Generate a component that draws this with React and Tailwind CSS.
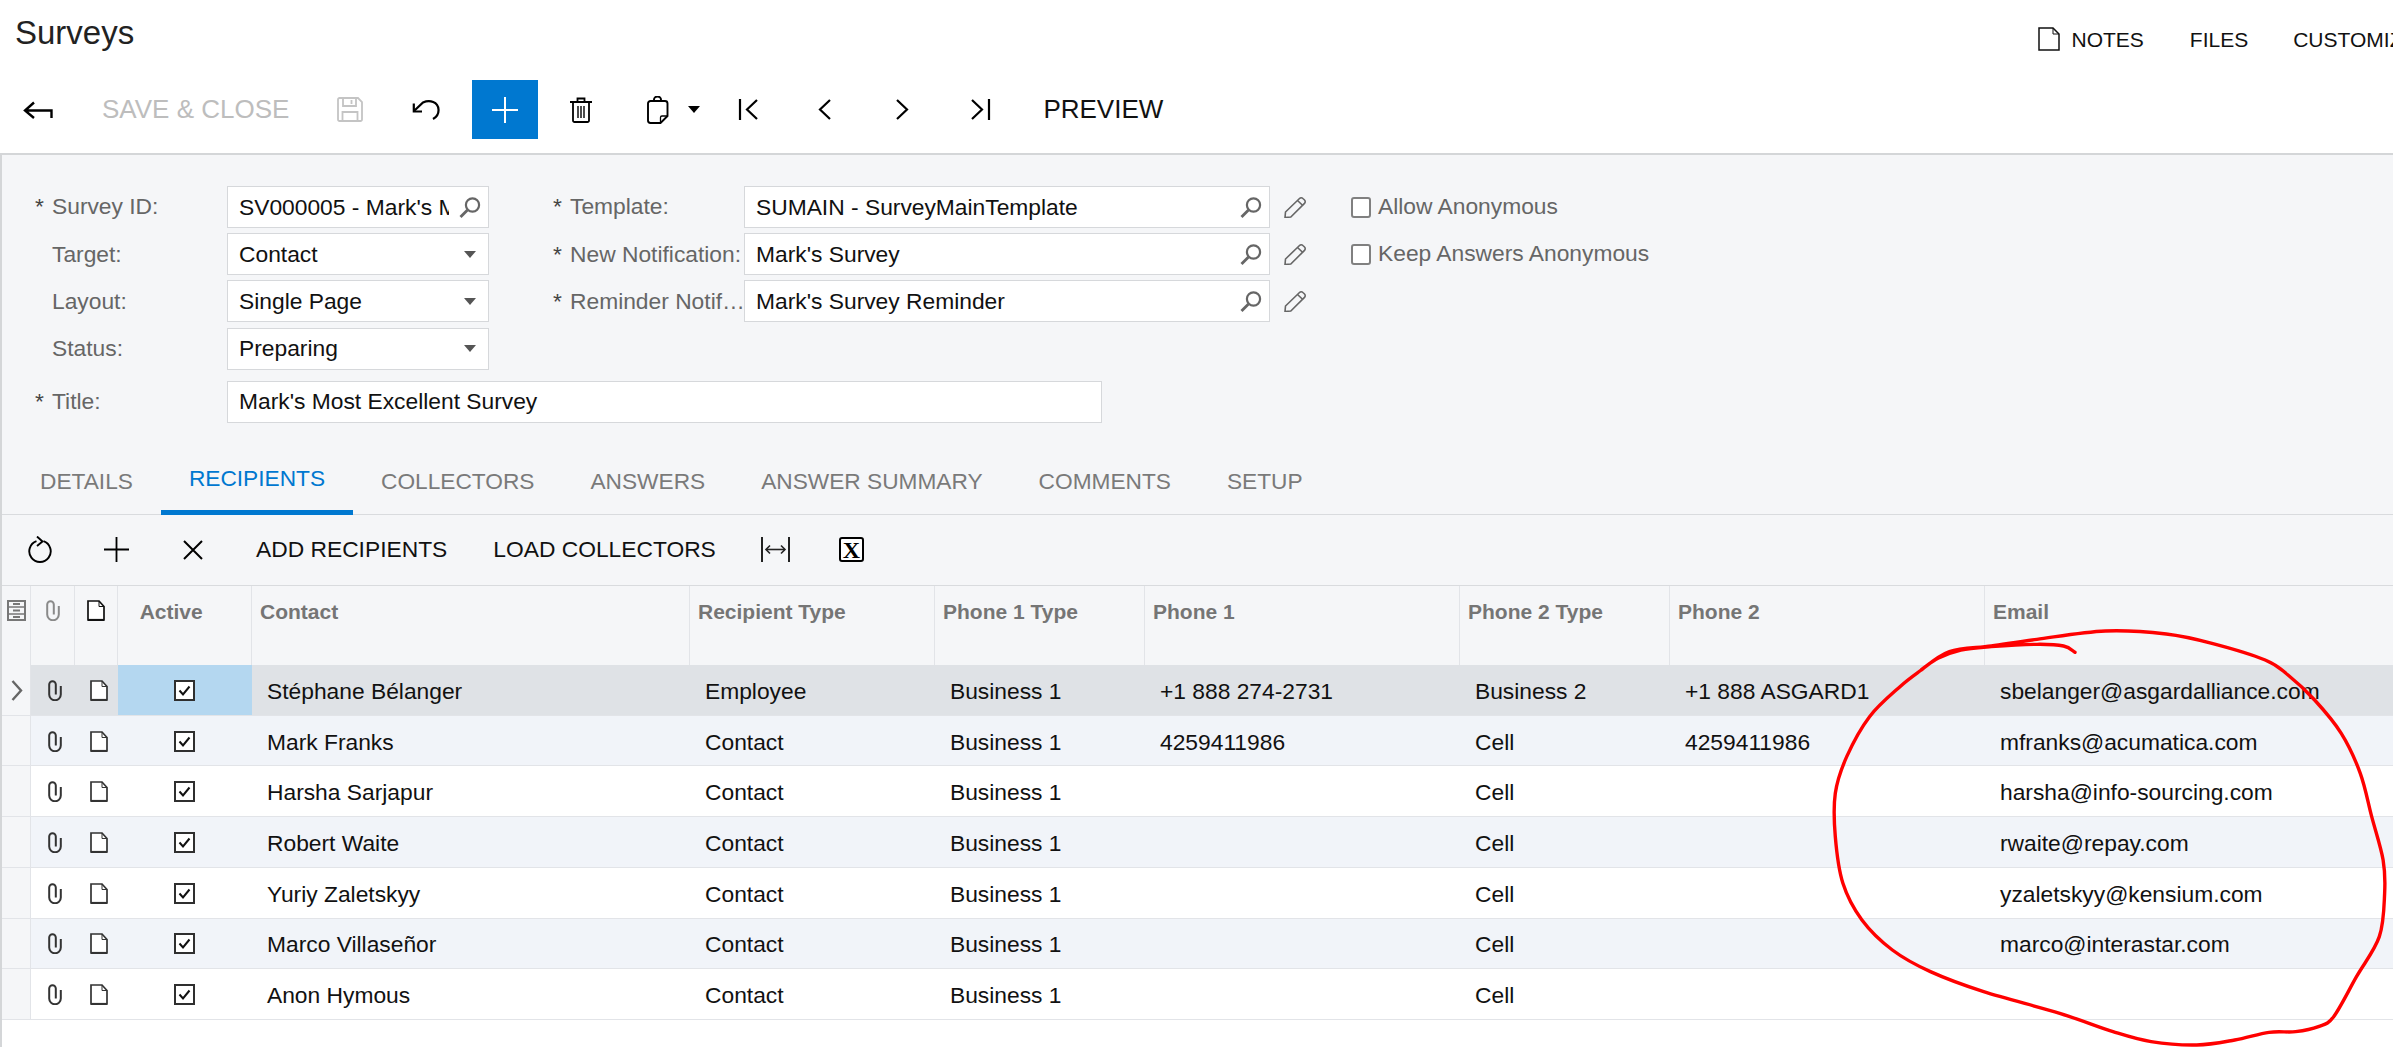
import React from 'react';

const smooth = (p) => {
  let d = `M${p[0][0]} ${p[0][1]}`;
  for (let i = 0; i < p.length - 1; i++) {
    const a = p[Math.max(i - 1, 0)], b = p[i], c = p[i + 1], e = p[Math.min(i + 2, p.length - 1)];
    d += ` C${b[0] + (c[0] - a[0]) / 6} ${b[1] + (c[1] - a[1]) / 6} ${c[0] - (e[0] - b[0]) / 6} ${c[1] - (e[1] - b[1]) / 6} ${c[0]} ${c[1]}`;
  }
  return d;
};
const inkPts = [[1150,277],[1135,258],[1100,253],[1040,260],[1000,270],[970,295],[948,330],[985,275],[1040,258],[1100,238],[1190,213],[1270,222],[1330,250],[1400,300],[1430,345],[1465,420],[1500,520],[1525,640],[1540,770],[1555,900],[1557,1000],[1550,1130],[1520,1250],[1490,1370],[1470,1400],[1440,1415],[1405,1417],[1360,1440],[1310,1455],[1250,1445],[1200,1415],[1130,1360],[1030,1295],[960,1235],[910,1170],[870,1080],[845,970],[835,830],[835,700],[850,590],[880,470],[920,380],[948,330]];

const Back = () => (<svg width="30" height="18" viewBox="0 0 30 18" fill="none" stroke="#000" strokeWidth="2.4"><path d="M2 9.5H28.5V17M11 1.5L2 9.5L11 17" /></svg>);
const Save = () => (<svg width="26" height="25" viewBox="0 0 26 25" fill="none" stroke="#c4c4c4" strokeWidth="1.8"><path d="M2.5 1H21L25 5V22.5a1.5 1.5 0 0 1-1.5 1.5H2.5A1.5 1.5 0 0 1 1 22.5V2.5A1.5 1.5 0 0 1 2.5 1Z" /><path d="M6 1V9H19V1M14.5 3V7M5.5 24V15H20.5V24" /></svg>);
const Undo = () => (<svg width="28" height="20" viewBox="0 0 28 20" fill="none" stroke="#000" strokeWidth="2.2"><path d="M2 11L11 2.5C18 -0.5 26 2 26.5 9.5C26.8 13.5 24.5 17 21 19" /><path d="M1.8 3.5V11.5H10" /></svg>);
const Plus = ({ c = '#000', s = 26, w = 2 }) => (<svg width={s} height={s} viewBox="0 0 26 26" fill="none" stroke={c} strokeWidth={w}><path d="M13 0V26M0 13H26" /></svg>);
const Trash = () => (<svg width="22" height="26" viewBox="0 0 22 26" fill="none" stroke="#000" strokeWidth="1.8"><path d="M0 5H22M7.5 5V1.5H14.5V5M3 5V23.5a1.5 1.5 0 0 0 1.5 1.5H17.5a1.5 1.5 0 0 0 1.5-1.5V5" /><path d="M8 9V21M11 9V21M14 9V21" strokeWidth="1.4" /></svg>);
const Clip = () => (<svg width="22" height="28" viewBox="0 0 22 28" fill="none" stroke="#000" strokeWidth="1.9"><path d="M7 5V3.5a3.5 3 0 0 1 7 0V5" /><path d="M3.5 5H18a2.5 2.5 0 0 1 2.5 2.5V20L13.5 27H3.5A2.5 2.5 0 0 1 1 24.5V7.5A2.5 2.5 0 0 1 3.5 5Z" /><path d="M20.5 20H15a1.5 1.5 0 0 0-1.5 1.5V27" strokeWidth="1.3" /></svg>);
const Chev = ({ d }) => (<svg width="22" height="22" viewBox="0 0 22 22" fill="none" stroke="#000" strokeWidth="2.2"><path d={d} /></svg>);

const Search = () => (<svg className="shrink-0" width="22" height="21" viewBox="0 0 22 21" fill="none" stroke="#666" strokeWidth="2.2"><circle cx="13.5" cy="8" r="6.6" /><path d="M8.5 13L1.5 20" strokeWidth="2.8" /></svg>);
const Pencil = () => (<svg width="23" height="22" viewBox="0 0 23 22" fill="none" stroke="#666" strokeWidth="1.6"><path d="M1.5 16L15.5 2.5a2.4 2.4 0 0 1 3.4 0L20.5 4a2.4 2.4 0 0 1 0 3.4L6.8 21L1 21.5Z" /><path d="M13.5 4.5L18.8 9.5" /></svg>);
const Caret = () => (<span className="block mr-[5px] w-0 h-0 border-x-[6px] border-x-transparent border-t-[7px] border-t-[#555]" />);

const Clipper = ({ c = '#333' }) => (<svg width="16" height="21" viewBox="0 0 16 21" fill="none" stroke={c} strokeWidth="2"><path d="M13.8 6V14.5a5.8 5.8 0 0 1-11.6 0V4.5a3.3 3.3 0 0 1 6.6 0V14.5" /></svg>);
const Doc = ({ c = '#333' }) => (<svg width="18" height="21" viewBox="0 0 18 21" fill="#fff" stroke={c} strokeWidth="1.7"><path d="M1 1H12L17 6.5V20H1Z" /><path d="M1 20H17" strokeWidth="2.2" /><path d="M12 1V6.5H17" fill="none" strokeWidth="1" /></svg>);
const Box = () => (<svg width="21" height="21" viewBox="0 0 21 21"><rect x="1" y="1" width="19" height="19" fill="#fff" stroke="#2f2f2f" strokeWidth="2" /><path d="M5.5 10.5L9 14.5L15.5 6.5" fill="none" stroke="#111" strokeWidth="2" /></svg>);

const Field = ({ w, children, suffix }) => (
  <div className={`${w} h-[42px] shrink-0 bg-white border-[1.5px] border-[#d6d8db] flex items-center pl-[11px] pr-[7px] text-[22.8px] text-[#111] whitespace-nowrap`}>
    <span className="flex-1 overflow-hidden">{children}</span>
    {suffix}
  </div>
);
const Label = ({ star, w, children }) => (
  <div className={`${w} shrink-0 flex items-center text-[22.8px] text-[#666] whitespace-nowrap overflow-hidden pb-[1px]`}>
    <span className="w-[17px] shrink-0 text-[#444]">{star ? '*' : ''}</span>
    <span>{children}</span>
  </div>
);

const Tab = ({ active, children }) => (
  <div className={active ? 'h-[92px] px-[28px] flex items-center pt-[24px] text-[22.7px] text-[#0078d0] border-b-[5px] border-[#0078d0] -mb-[1px] whitespace-nowrap' : 'h-[91px] px-[28px] flex items-center pt-[25px] text-[22.7px] text-[#7a7a7a] whitespace-nowrap'}>{children}</div>
);

const rows = [
  ['Stéphane Bélanger', 'Employee', 'Business 1', '+1 888 274-2731', 'Business 2', '+1 888 ASGARD1', 'sbelanger@asgardalliance.com'],
  ['Mark Franks', 'Contact', 'Business 1', '4259411986', 'Cell', '4259411986', 'mfranks@acumatica.com'],
  ['Harsha Sarjapur', 'Contact', 'Business 1', '', 'Cell', '', 'harsha@info-sourcing.com'],
  ['Robert Waite', 'Contact', 'Business 1', '', 'Cell', '', 'rwaite@repay.com'],
  ['Yuriy Zaletskyy', 'Contact', 'Business 1', '', 'Cell', '', 'yzaletskyy@kensium.com'],
  ['Marco Villaseñor', 'Contact', 'Business 1', '', 'Cell', '', 'marco@interastar.com'],
  ['Anon Hymous', 'Contact', 'Business 1', '', 'Cell', '', ''],
];
const colW = ['w-[438px]', 'w-[245px]', 'w-[210px]', 'w-[315px]', 'w-[210px]', 'w-[315px]', 'w-[408px]'];
const heads = ['Contact', 'Recipient Type', 'Phone 1 Type', 'Phone 1', 'Phone 2 Type', 'Phone 2', 'Email'];

const Row = ({ r, i }) => {
  const sel = i === 0;
  const bg = sel ? 'bg-[#dfe2e6]' : i % 2 === 1 ? 'bg-[#f1f4f9]' : 'bg-white';
  return (
    <div className="h-[50.7px] flex border-b-[1.5px] border-[#e2e4e8] text-[22.8px] text-[#111]">
      <div className="w-[28.7px] shrink-0 bg-[#f5f6f8] border-r-[1.5px] border-[#e2e4e8] flex items-center pl-[9px] pt-[1px]">
        {sel && <svg width="12" height="21" viewBox="0 0 12 21" fill="none" stroke="#666" strokeWidth="2.4"><path d="M1.5 1L10 10.5L1.5 20" /></svg>}
      </div>
      <div className={`flex-1 flex ${bg}`}>
        <div className="w-[44px] shrink-0 flex items-center justify-center pl-[5px] pt-[1px]"><Clipper /></div>
        <div className="w-[43px] shrink-0 flex items-center justify-center pl-[6px] pt-[1px]"><Doc /></div>
        <div className={`w-[134.3px] shrink-0 flex items-center justify-center pt-[1px] ${sel ? 'bg-[#b4d7f0]' : ''}`}><Box /></div>
        {r.map((t, k) => (
          <div key={k} className={`${colW[k]} shrink-0 flex items-center pl-[15px] pt-[2px] whitespace-nowrap overflow-hidden`}>{t}</div>
        ))}
      </div>
    </div>
  );
};

export default function App() {
  return (
    <div className="relative w-[2393px] h-[1047px] overflow-hidden bg-white font-['Liberation_Sans',Arial,sans-serif]">
      {/* top bar */}
      <div className="h-[80px] flex justify-between">
        <div className="pl-[15px] pt-[14px] text-[33px] leading-[38px] text-[#222]">Surveys</div>
        <div className="w-[355.5px] shrink-0 flex items-start pt-[27px] text-[21px] text-[#111] whitespace-nowrap overflow-hidden">
          <svg className="shrink-0" width="22" height="24" viewBox="0 0 22 24" fill="none" stroke="#111" strokeWidth="1.5"><path d="M1 1H15L21 7V23H1Z" /><path d="M15 1V7H21" strokeWidth="1" /></svg>
          <span className="ml-[12px] leading-[26px]">NOTES</span>
          <span className="ml-[46px] leading-[26px]">FILES</span>
          <span className="ml-[45px] leading-[26px]">CUSTOMIZATION</span>
        </div>
      </div>
      {/* main toolbar */}
      <div className="h-[59px] flex items-center text-[26px] whitespace-nowrap">
        <div className="w-[76px] flex justify-center"><Back /></div>
        <span className="ml-[26px] text-[#bdbdbd]">SAVE &amp; CLOSE</span>
        <div className="ml-[22px] w-[77px] flex justify-center"><Save /></div>
        <div className="w-[76px] flex justify-center"><Undo /></div>
        <div className="ml-[8px] w-[66px] h-[59px] bg-[#0078d0] flex items-center justify-center"><Plus c="#fff" /></div>
        <div className="ml-[5px] w-[76px] flex justify-center"><Trash /></div>
        <div className="w-[92px] flex items-center pl-[28px]"><Clip /><span className="ml-[19px] w-0 h-0 border-x-[6px] border-x-transparent border-t-[7px] border-t-black" /></div>
        <div className="w-[76px] flex justify-center"><Chev d="M2 0V21M19 1L9 10.5L19 20" /></div>
        <div className="w-[76px] flex justify-center"><Chev d="M16 1L6 10.5L16 20" /></div>
        <div className="ml-[1px] w-[76px] flex justify-center"><Chev d="M6 1L16 10.5L6 20" /></div>
        <div className="ml-[2px] w-[76px] flex justify-center"><Chev d="M3 1L13 10.5L3 20M20 0V21" /></div>
        <span className="ml-[25px] text-[#111]">PREVIEW</span>
      </div>
      {/* body */}
      <div className="mt-[14px] h-[894px] border-l-2 border-t-2 border-[#d4d6d8]">
        <div className="bg-[#f5f6f8]">
          {/* form */}
          <div className="pt-[31px] pl-[33px]">
            <div className="flex">
              <div className="flex flex-col gap-[5.2px] w-[518px] shrink-0">
                <div className="flex items-center">
                  <Label star w="w-[192px]">Survey ID:</Label>
                  <Field w="w-[262px]" suffix={<span className="ml-[10px] flex"><Search /></span>}>SV000005 - Mark's Most</Field>
                </div>
                {['Contact', 'Single Page', 'Preparing'].map((v, i) => (
                  <div key={v} className="flex items-center">
                    <Label w="w-[192px]">{['Target:', 'Layout:', 'Status:'][i]}</Label>
                    <Field w="w-[262px]" suffix={<Caret />}>{v}</Field>
                  </div>
                ))}
              </div>
              <div className="flex flex-col gap-[5.2px] w-[798px] shrink-0">
                {[['Template:', 'SUMAIN - SurveyMainTemplate'], ['New Notification:', "Mark's Survey"], ['Reminder Notif…', "Mark's Survey Reminder"]].map(([l, v]) => (
                  <div key={l} className="flex items-center">
                    <Label star w="w-[191px]">{l}</Label>
                    <Field w="w-[526px]" suffix={<Search />}>{v}</Field>
                    <span className="ml-[14px] flex"><Pencil /></span>
                  </div>
                ))}
              </div>
              <div className="flex flex-col gap-[5.2px]">
                {['Allow Anonymous', 'Keep Answers Anonymous'].map((l) => (
                  <div key={l} className="h-[42px] flex items-center text-[22.8px] text-[#666] whitespace-nowrap">
                    <span className="w-[20px] h-[21px] rounded-[3px] border-2 border-[#808080] bg-white mr-[7px]" />
                    <span className="pb-[2px]">{l}</span>
                  </div>
                ))}
              </div>
            </div>
            <div className="mt-[11px] flex items-center">
              <Label star w="w-[192px]">Title:</Label>
              <Field w="w-[875px]">Mark's Most Excellent Survey</Field>
            </div>
          </div>
          {/* tabs */}
          <div className="flex pl-[10px] border-b-[1.5px] border-[#d9dbde]">
            <Tab>DETAILS</Tab>
            <Tab active>RECIPIENTS</Tab>
            <Tab>COLLECTORS</Tab>
            <Tab>ANSWERS</Tab>
            <Tab>ANSWER SUMMARY</Tab>
            <Tab>COMMENTS</Tab>
            <Tab>SETUP</Tab>
          </div>
          {/* grid toolbar */}
          <div className="h-[70px] flex items-center text-[22.8px] text-[#111] whitespace-nowrap">
            <div className="w-[76px] flex justify-center pb-[1px]">
              <svg width="24" height="27" viewBox="0 0 24 27" fill="none" stroke="#000" strokeWidth="1.9"><path d="M8.5 5.2A10.7 10.7 0 1 0 15.5 5.2" /><path d="M9 0.5L14.5 5.5L9 10" /></svg>
            </div>
            <div className="w-[76px] flex justify-center"><Plus s={25} w={1.9} /></div>
            <div className="w-[77px] flex justify-center">
              <svg width="20" height="20" viewBox="0 0 20 20" fill="none" stroke="#000" strokeWidth="2"><path d="M1 1L19 19M19 1L1 19" /></svg>
            </div>
            <span className="ml-[25px]">ADD RECIPIENTS</span>
            <span className="ml-[46px]">LOAD COLLECTORS</span>
            <div className="ml-[45px] flex">
              <svg width="29" height="25" viewBox="0 0 29 25" fill="none" stroke="#222" strokeWidth="1.6"><path d="M1 0V25M28 0V25" strokeWidth="2" /><path d="M5 12.5H24" /><path d="M9 8.5L5 12.5L9 16.5M20 8.5L24 12.5L20 16.5" /></svg>
            </div>
            <div className="ml-[49px] w-[25px] h-[25px] rounded-[3px] border-2 border-black bg-white flex items-center justify-center font-['Liberation_Serif',serif] font-bold text-[24px] leading-none text-black">X</div>
          </div>
          {/* grid */}
          <div className="border-t-[1.5px] border-[#d9dbde]">
            <div className="h-[79.5px] flex text-[21px] font-bold text-[#757575] whitespace-nowrap">
              <div className="w-[28.7px] shrink-0 border-r-[1.5px] border-[#e2e4e8] pl-[5px] pt-[14px]">
                <svg width="19" height="21" viewBox="0 0 19 21" fill="none" stroke="#777" strokeWidth="2"><rect x="1" y="1" width="17" height="19" /><path d="M1 7H18M1 14H18" strokeWidth="1.5" /><path d="M6 4H13M6 10.5H13M6 17H13" strokeWidth="2" /></svg>
              </div>
              <div className="w-[44px] shrink-0 border-r-[1.5px] border-[#e2e4e8] pl-[14px] pt-[14px]"><Clipper c="#8a8a8a" /></div>
              <div className="w-[43px] shrink-0 border-r-[1.5px] border-[#e2e4e8] pl-[12px] pt-[14px]"><Doc c="#111" /></div>
              <div className="w-[134.3px] shrink-0 border-r-[1.5px] border-[#e2e4e8] pl-[22px] pt-[10px]">Active</div>
              {heads.map((h, k) => (
                <div key={h} className={`${colW[k]} shrink-0 pl-[8px] pt-[10px] ${k < 6 ? 'border-r-[1.5px] border-[#e2e4e8]' : ''}`}>{h}</div>
              ))}
            </div>
            {rows.map((r, i) => <Row key={i} r={r} i={i} />)}
          </div>
        </div>
      </div>
      {/* hand-drawn annotation */}
      <svg className="absolute left-[1200px] top-[560px] w-[1193px] h-[487px] pointer-events-none" viewBox="0 0 1568 1461" preserveAspectRatio="none" fill="none">
        <path d={smooth(inkPts)} stroke="#f00" strokeWidth="3.4" vectorEffect="non-scaling-stroke" strokeLinecap="round" strokeLinejoin="round" />
      </svg>
    </div>
  );
}
